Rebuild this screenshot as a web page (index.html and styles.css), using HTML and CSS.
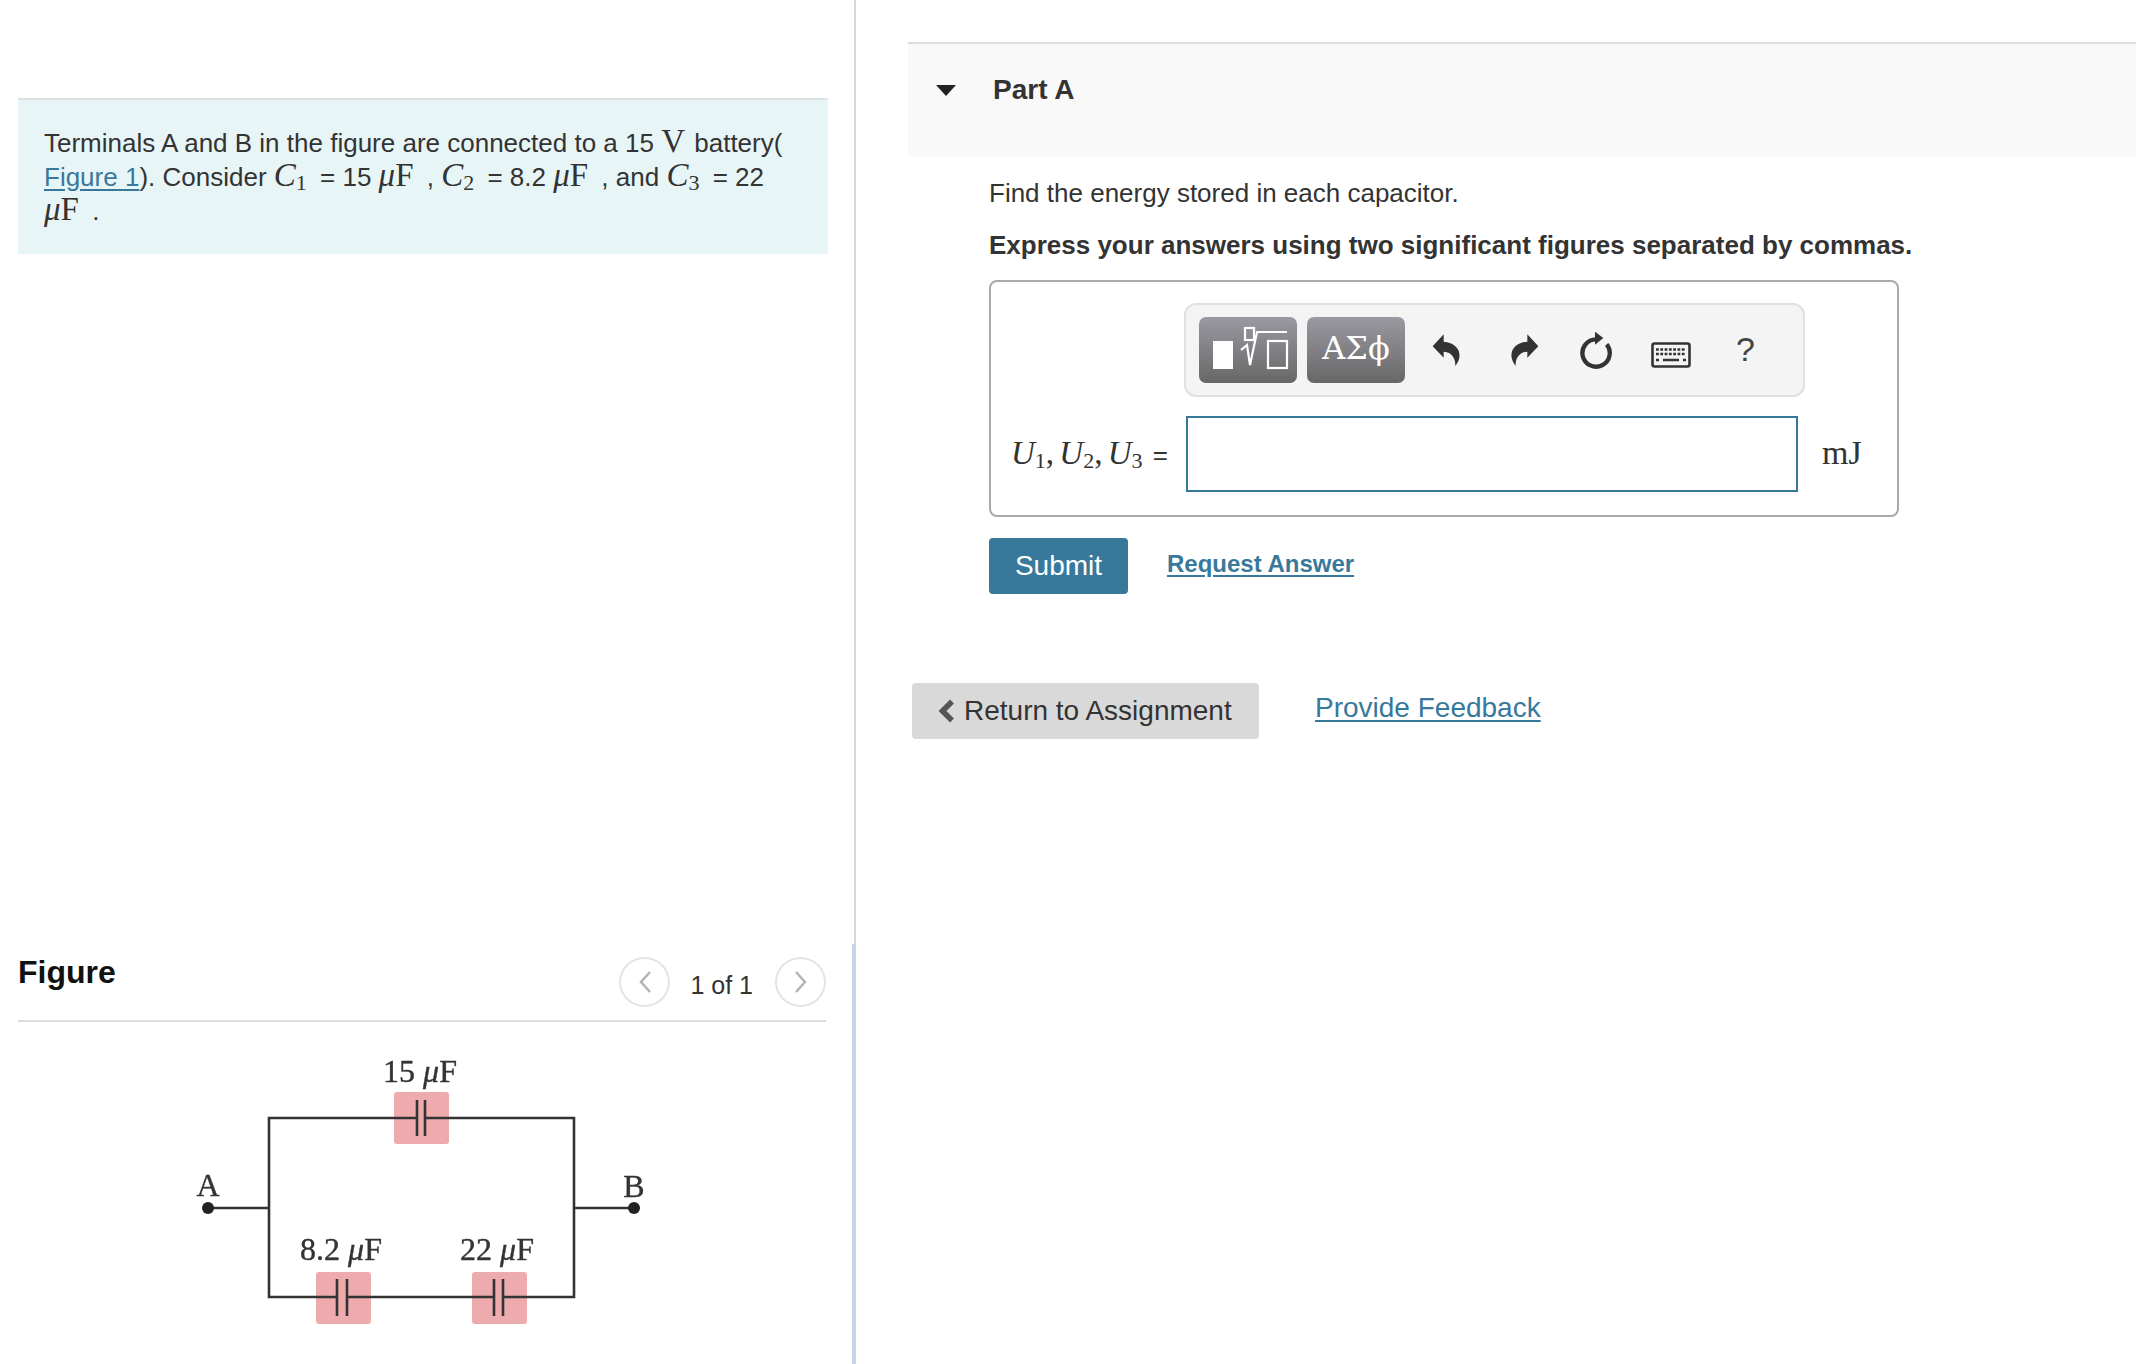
FILE: index.html
```html
<!DOCTYPE html>
<html lang="en">
<head>
    <meta charset="UTF-8">
    <meta name="viewport" content="width=device-width, initial-scale=1.0">
    <title>Part A</title>
    <link rel="stylesheet" href="styles.css">
</head>
<body>
    <div class="page">
        <div class="left">
            <div class="intro">
                Terminals A and B in the figure are connected to a 15 <span class="m tight">V</span> battery(<br>
                <a href="#" class="link">Figure 1</a>). Consider <span class="m"><i>C</i><sub>1</sub></span> = 15 <span class="m"><i>μ</i>F</span> , <span class="m"><i>C</i><sub>2</sub></span> = 8.2 <span class="m"><i>μ</i>F</span> , and <span class="m"><i>C</i><sub>3</sub></span> = 22<br>
                <span class="m"><i>μ</i>F</span> .
            </div>
            <div class="figure-head">
                <div class="figure-title">Figure</div>
                <div class="pager">
                    <span class="circle">
                        <svg width="14" height="24" viewBox="0 0 14 24"><path d="M12 2 L3 12 L12 22" class="chev"/></svg>
                    </span>
                    <span class="pager-text">1 of 1</span>
                    <span class="circle">
                        <svg width="14" height="24" viewBox="0 0 14 24"><path d="M2 2 L11 12 L2 22" class="chev"/></svg>
                    </span>
                </div>
            </div>
            <svg class="circuit" width="810" height="341" viewBox="18 1023 810 341">
                <rect class="pink" x="394" y="1093" width="55" height="52" rx="3"/>
                <rect class="pink" x="316" y="1273" width="55" height="52" rx="3"/>
                <rect class="pink" x="472" y="1273" width="55" height="52" rx="3"/>
                <path class="wire" d="M417 1119 H269 V1298 H337 M347 1298 H494 M503 1298 H574 V1119 H425"/>
                <path class="wire" d="M208 1209 H269 M574 1209 H634"/>
                <path class="wire" d="M417 1101 V1137 M425 1101 V1137 M337 1280 V1317 M347 1280 V1317 M494 1280 V1317 M503 1280 V1317"/>
                <ellipse class="dot" cx="208" cy="1209" rx="6" ry="6"/>
                <ellipse class="dot" cx="634" cy="1209" rx="6" ry="6"/>
                <text class="fig-label" x="420" y="1083" text-anchor="middle">15 <tspan font-style="italic">μ</tspan>F</text>
                <text class="fig-label" x="341" y="1261" text-anchor="middle">8.2 <tspan font-style="italic">μ</tspan>F</text>
                <text class="fig-label" x="497" y="1261" text-anchor="middle">22 <tspan font-style="italic">μ</tspan>F</text>
                <text class="fig-label" x="208" y="1197" text-anchor="middle">A</text>
                <text class="fig-label" x="634" y="1198" text-anchor="middle">B</text>
            </svg>
        </div>

        <div class="divider">
            <div class="divider-top"></div>
            <div class="divider-bottom"></div>
        </div>

        <div class="right">
            <div class="part-head">
                <svg class="part-arrow" width="20" height="11" viewBox="0 0 20 11"><path d="M0 0 H20 L10 11 Z"/></svg>
                <div class="part-title">Part A</div>
            </div>
            <div class="question">
                <p class="find">Find the energy stored in each capacitor.</p>
                <p class="express">Express your answers using two significant figures separated by commas.</p>
                <div class="answer">
                    <div class="toolbar">
                        <div class="tool-btn">
                            <svg width="98" height="66" viewBox="0 0 98 66">
                                <rect x="14" y="24" width="20" height="28" fill="#fff"/>
                                <rect x="46" y="11" width="9" height="12" class="tmpl"/>
                                <path d="M42 33 L48 28 L51 48 L58 15 H88" class="tmpl"/>
                                <rect x="69" y="24" width="19" height="27" class="tmpl"/>
                            </svg>
                        </div>
                        <div class="tool-btn tool-greek">ΑΣϕ</div>
                        <span class="tool-slot">
                            <svg width="30" height="34" viewBox="22 38 90 102"><path class="ico" d="M27 78 L60 42 L60 64 C90 66 112 85 107 112 C105 122 100 130 95 137 C96 115 85 95 60 94 L60 112 Z"/></svg>
                        </span>
                        <span class="tool-slot">
                            <svg class="tool-redo" width="30" height="34" viewBox="22 38 90 102"><path class="ico" transform="matrix(-1 0 0 1 134 0)" d="M27 78 L60 42 L60 64 C90 66 112 85 107 112 C105 122 100 130 95 137 C96 115 85 95 60 94 L60 112 Z"/></svg>
                        </span>
                        <span class="tool-slot">
                            <svg width="36" height="38" viewBox="462 34 108 114">
                                <path d="M548 74 A41 41 0 1 1 516 59" fill="none" stroke="#333" stroke-width="13"/>
                                <path class="ico" d="M513 36 L538 55 L513 75 Z"/>
                            </svg>
                        </span>
                        <span class="tool-slot">
                            <svg class="tool-keys" width="40" height="26" viewBox="0 0 40 26">
                                <rect x="1.5" y="1.5" width="37" height="23" rx="2" fill="none" stroke="#333" stroke-width="2.6"/>
                                <path d="M5 7.5 H35 M5 12 H35" stroke="#333" stroke-width="2.6" stroke-dasharray="2.8 1.5" fill="none"/>
                                <path d="M5 18 H8 M12 18 H28 M32 18 H35" stroke="#333" stroke-width="2.6" fill="none"/>
                            </svg>
                        </span>
                        <span class="tool-slot tool-help">?</span>
                    </div>
                    <div class="answer-row">
                        <label class="answer-label"><i>U</i><sub>1</sub>, <i>U</i><sub>2</sub>, <i>U</i><sub>3</sub> <span class="eq">=</span></label>
                        <input class="answer-input" type="text">
                        <span class="answer-unit">mJ</span>
                    </div>
                </div>
                <div class="submit-row">
                    <button class="submit">Submit</button>
                    <a href="#" class="link request">Request Answer</a>
                </div>
            </div>
            <div class="foot-row">
                <button class="back">
                    <svg width="15" height="24" viewBox="0 0 15 24"><path d="M13 2.5 L3.5 12 L13 21.5" fill="none" stroke="#555" stroke-width="5.5"/></svg>
                    Return to Assignment
                </button>
                <a href="#" class="link feedback">Provide Feedback</a>
            </div>
        </div>
    </div>
</body>
</html>
```

FILE: styles.css
```css
html, body {
    margin: 0;
    height: 100%;
    overflow: hidden;
    background-color: #fff;
}
body {
    font-family: 'Liberation Sans', Arial, sans-serif;
    color: #333;
}
.link {
    color: #38799b;
    text-decoration: underline;
    text-underline-offset: 3px;
}
.page {
    display: flex;
    height: 1364px;
}

/* left column */
.left {
    width: 810px;
    margin-left: 18px;
    margin-right: 24px;
    flex-shrink: 0;
}
.intro {
    margin-top: 98px;
    border-top: 2px solid #dde3e3;
    background-color: #e8f5f6;
    padding: 26px 26px 0;
    height: 128px;
    font-size: 26px;
    line-height: 34px;
}
.m {
    font-family: 'Liberation Serif', 'Times New Roman', serif;
    font-size: 33px;
    line-height: 0;
    margin-right: 6px;
}
.m.tight {
    margin-right: 2px;
}
.m sub, .answer-label sub {
    font-size: 22px;
    line-height: 0;
    vertical-align: -4px;
}
.figure-head {
    display: flex;
    justify-content: space-between;
    align-items: flex-start;
    margin-top: 700px;
    margin-right: 2px;
    padding-bottom: 13px;
    border-bottom: 2px solid #dcdcdc;
}
.figure-title {
    font-size: 32px;
    line-height: 36px;
    font-weight: bold;
    color: #111;
}
.pager {
    display: flex;
    margin-top: 3px;
    height: 50px;
}
.circle {
    width: 51px;
    height: 50px;
    box-sizing: border-box;
    border: 2px solid #e4e4e4;
    border-radius: 50%;
    display: flex;
    justify-content: center;
    align-items: center;
}
.chev {
    fill: none;
    stroke: #b4b4b4;
    stroke-width: 2.5;
}
.pager-text {
    font-size: 25px;
    line-height: 50px;
    margin: 3px 22px 0 20px;
}
.circuit {
    display: block;
    filter: blur(0.5px);
}
.pink {
    fill: #eeabae;
}
.wire {
    fill: none;
    stroke: #333;
    stroke-width: 2.6;
}
.dot {
    fill: #222;
}
.fig-label {
    font-family: 'Liberation Serif', serif;
    font-size: 32px;
    fill: #333;
    stroke: #333;
    stroke-width: 0.4;
}

/* divider between the columns */
.divider {
    width: 4px;
    flex-shrink: 0;
    display: flex;
    flex-direction: column;
    align-items: flex-end;
}
.divider-top {
    width: 2px;
    height: 944px;
    background-color: #d5d9dd;
}
.divider-bottom {
    width: 4px;
    flex: 1;
    background-color: #c6d4e4;
}

/* right column */
.right {
    flex: 1;
    margin-left: 52px;
}
.part-head {
    display: flex;
    align-items: flex-start;
    margin-top: 42px;
    height: 113px;
    border-top: 2px solid #dedede;
    background-color: #f9f9f9;
}
.part-arrow {
    margin: 41px 0 0 28px;
    fill: #222;
}
.part-title {
    margin: 30px 0 0 37px;
    font-size: 28px;
    line-height: 32px;
    font-weight: bold;
}
.question {
    padding-left: 81px;
}
.find, .express {
    margin: 0;
    font-size: 26px;
    line-height: 32px;
}
.find {
    margin-top: 20px;
}
.express {
    margin-top: 20px;
    font-weight: bold;
}
.answer {
    width: 906px;
    margin-top: 19px;
    padding: 21px 0 23px;
    border: 2px solid #aaa;
    border-radius: 8px;
}
.toolbar {
    display: flex;
    align-items: center;
    width: 592px;
    height: 90px;
    margin-left: 193px;
    padding-left: 13px;
    padding-right: 12px;
    background-color: #f4f4f4;
    border: 2px solid #e0e0e0;
    border-radius: 12px;
}
.tool-btn {
    width: 98px;
    height: 66px;
    margin-right: 10px;
    border-radius: 7px;
    background: linear-gradient(#9b99a1, #676767);
}
.tool-greek {
    margin-right: 3px;
    color: #fff;
    font-family: 'DejaVu Serif', 'Liberation Serif', serif;
    font-size: 32px;
    line-height: 62px;
    text-align: center;
}
.tool-slot {
    width: 75px;
    display: flex;
    justify-content: center;
    align-items: center;
}
.tool-redo {
    margin-left: 8px;
}
.tool-keys {
    margin-top: 10px;
}
.tool-help {
    font-size: 34px;
    color: #444;
    margin-top: -2px;
}
.tmpl {
    fill: none;
    stroke: #fff;
    stroke-width: 2.2;
}
.ico {
    fill: #333;
}
.answer-row {
    display: flex;
    align-items: center;
    margin-top: 19px;
    padding-left: 20px;
}
.answer-label {
    width: 175px;
    flex-shrink: 0;
    margin-top: -2px;
    font-family: 'Liberation Serif', serif;
    font-size: 33px;
    word-spacing: -3px;
}
.answer-label .eq {
    margin-left: 5px;
    font-family: 'Liberation Sans', sans-serif;
    font-size: 26px;
}
.answer-input {
    width: 612px;
    height: 76px;
    box-sizing: border-box;
    border: 2px solid #38799b;
    background-color: #fff;
    padding: 0;
    outline: none;
}
.answer-unit {
    margin-left: 24px;
    margin-top: -2px;
    font-family: 'Liberation Serif', serif;
    font-size: 34px;
}
.submit-row {
    display: flex;
    align-items: flex-start;
    margin-top: 21px;
}
.submit {
    width: 139px;
    height: 56px;
    border: none;
    border-radius: 4px;
    padding: 0;
    background-color: #38799b;
    color: #fff;
    font-family: inherit;
    font-size: 28px;
}
.request {
    margin: 12px 0 0 39px;
    font-size: 24px;
    line-height: 28px;
    font-weight: bold;
}
.foot-row {
    display: flex;
    align-items: flex-start;
    margin: 89px 0 0 4px;
}
.back {
    display: flex;
    align-items: center;
    gap: 10px;
    width: 347px;
    height: 56px;
    padding: 0 0 0 27px;
    border: none;
    border-radius: 4px;
    background-color: #d9d9d9;
    color: #333;
    font-family: inherit;
    font-size: 28px;
}
.feedback {
    margin: 8px 0 0 56px;
    font-size: 28px;
    line-height: 34px;
}
```
